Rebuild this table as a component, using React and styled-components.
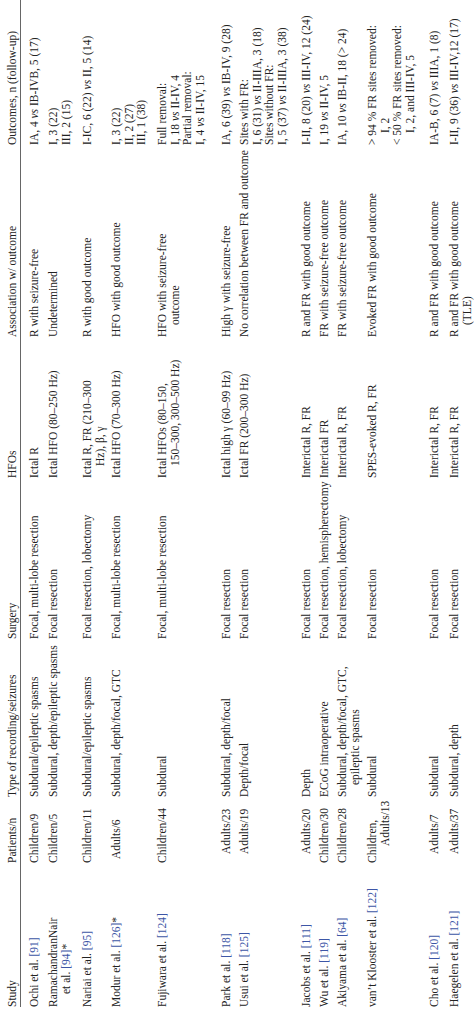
import React from 'react';
import styled, { createGlobalStyle } from 'styled-components';

const GlobalStyle = createGlobalStyle`
  html, body { margin: 0; padding: 0; background: #fff; }
  body { overflow: hidden; }
`;

const COLS = '144px 66px 158px 161px 141px 192px 1fr';

const Page = styled.div`
  width: 474px;
  height: 1009px;
  overflow: hidden;
  background: #fff;
`;

// the table is typeset landscape and turned a quarter to the left, like the scanned page
const Sheet = styled.div`
  width: 1009px;
  height: 474px;
  box-sizing: border-box;
  padding-left: 2px;
  transform-origin: 0 0;
  transform: translateY(1009px) rotate(-90deg);
  font-family: 'Liberation Serif', 'Times New Roman', serif;
  font-size: 11.5px;
  line-height: 12.7px;
  color: #222;
`;

const HeadRow = styled.div`
  display: grid;
  grid-template-columns: ${COLS};
  align-items: end;
  height: 21px;
  box-sizing: border-box;
  padding-bottom: 1.5px;
  border-bottom: 1.5px solid #666;
`;

const Body = styled.div`
  padding-top: 7px;
`;

const Row = styled.div`
  display: grid;
  grid-template-columns: ${COLS};
  align-items: start;
  height: ${p => (p.$h ? `${p.$h}px` : 'auto')};
`;

const Cell = styled.div`
  white-space: nowrap;
  padding-left: ${p => p.$shift || 0}px;
`;

const Line = styled.div`
  padding-left: ${p => p.$indent || 0}px;
`;

const Ref = styled.span`
  color: #3d56a6;
`;

const Vs = styled.span`
  font-style: italic;
`;

const ind = (t, px = 12) => ({ t, indent: px });

const fmt = text =>
  text.split(/(\[\d+\]|\bvs\b)/).map((part, i) => {
    if (/^\[\d+\]$/.test(part)) return <Ref key={i}>{part}</Ref>;
    if (part === 'vs') return <Vs key={i}>vs</Vs>;
    return part;
  });

const headers = [
  'Study',
  'Patients/n',
  'Type of recording/seizures',
  'Surgery',
  'HFOs',
  'Association w/ outcome',
  'Outcomes, n (follow-up)'
];

const rows = [
  {
    h: 19,
    study: ['Ochi et al. [91]'],
    pat: ['Children/9'],
    type: ['Subdural/epileptic spasms'],
    surg: ['Focal, multi-lobe resection'],
    hfo: ['Ictal R'],
    assoc: ['R with seizure-free'],
    out: ['IA, 4 vs IB-IVB, 5 (17)']
  },
  {
    h: 34,
    study: ['RamachandranNair', ind('et al. [94]*', 13)],
    pat: ['Children/5'],
    type: ['Subdural, depth/epileptic spasms'],
    surg: ['Focal resection'],
    hfo: ['Ictal HFO (80–250 Hz)'],
    assoc: ['Undetermined'],
    out: ['I, 3 (22)', 'III, 2 (15)']
  },
  {
    h: 29,
    study: ['Nariai et al. [95]'],
    pat: ['Children/11'],
    type: ['Subdural/epileptic spasms'],
    surg: ['Focal resection, lobectomy'],
    hfo: ['Ictal R, FR (210–300', ind('Hz), β, γ')],
    assoc: ['R with good outcome'],
    out: ['I-IC, 6 (22) vs II, 5 (14)']
  },
  {
    h: 46,
    study: ['Modur et al. [126]*'],
    pat: ['Adults/6'],
    shift: 4,
    type: ['Subdural, depth/focal, GTC'],
    surg: ['Focal, multi-lobe resection'],
    hfo: ['Ictal HFO (70–300 Hz)'],
    assoc: ['HFO with good outcome'],
    out: ['I, 3 (22)', 'II, 2 (27)', 'III, 1 (38)']
  },
  {
    h: 64,
    study: ['Fujiwara et al. [124]'],
    pat: ['Children/44'],
    type: ['Subdural'],
    surg: ['Focal, multi-lobe resection'],
    hfo: ['Ictal HFOs (80–150,', ind('150–300, 300–500 Hz)')],
    assoc: ['HFO with seizure-free', ind('outcome')],
    out: ['Full removal:', 'I, 18 vs II-IV, 4', 'Partial removal:', 'I, 4 vs II-IV, 15']
  },
  {
    h: 18,
    study: ['Park et al. [118]'],
    pat: ['Adults/23'],
    shift: 9,
    type: ['Subdural, depth/focal'],
    surg: ['Focal resection'],
    hfo: ['Ictal high γ (60–99 Hz)'],
    assoc: ['High γ with seizure-free'],
    out: ['IA, 6 (39) vs IB-IV, 9 (28)']
  },
  {
    h: 62,
    study: ['Usui et al. [125]'],
    pat: ['Adults/19'],
    shift: 9,
    type: ['Depth/focal'],
    surg: ['Focal resection'],
    hfo: ['Ictal FR (200–300 Hz)'],
    assoc: ['No correlation between FR and outcome'],
    out: [
      'Sites with FR:',
      'I, 6 (31) vs II-IIIA, 3 (18)',
      'Sites without FR:',
      'I, 5 (37) vs II-IIIA, 3 (38)'
    ]
  },
  {
    h: 18,
    study: ['Jacobs et al. [111]'],
    pat: ['Adults/20'],
    shift: 9,
    type: ['Depth'],
    surg: ['Focal resection'],
    hfo: ['Interictal R, FR'],
    assoc: ['R and FR with good outcome'],
    out: ['I-II, 8 (20) vs III-IV, 12 (24)']
  },
  {
    h: 18,
    study: ['Wu et al. [119]'],
    pat: ['Children/30'],
    type: ['ECoG intraoperative'],
    surg: ['Focal resection, hemispherectomy'],
    hfo: ['Interictal FR'],
    assoc: ['FR with seizure-free outcome'],
    out: ['I, 19 vs II-IV, 5']
  },
  {
    h: 30,
    study: ['Akiyama et al. [64]'],
    pat: ['Children/28'],
    type: ['Subdural, depth/focal, GTC,', ind('epileptic spasms')],
    surg: ['Focal resection, lobectomy'],
    hfo: ['Interictal R, FR'],
    assoc: ['FR with seizure-free outcome'],
    out: ['IA, 10 vs IB-II, 18 (> 24)']
  },
  {
    h: 62,
    study: ['van’t Klooster et al. [122]'],
    pat: ['Children,', ind('Adults/13', 17)],
    type: ['Subdural'],
    surg: ['Focal resection'],
    hfo: ['SPES-evoked R, FR'],
    assoc: ['Evoked FR with good outcome'],
    out: [
      '> 94 % FR sites removed:',
      ind('I, 2'),
      '< 50 % FR sites removed:',
      ind('I, 2, and III-IV, 5')
    ]
  },
  {
    h: 20,
    study: ['Cho et al. [120]'],
    pat: ['Adults/7'],
    shift: 9,
    type: ['Subdural'],
    surg: ['Focal resection'],
    hfo: ['Interictal R, FR'],
    assoc: ['R and FR with good outcome'],
    out: ['IA-B, 6 (7) vs IIIA, 1 (8)']
  },
  {
    study: ['Haegelen et al. [121]'],
    pat: ['Adults/37'],
    shift: 9,
    type: ['Subdural, depth'],
    surg: ['Focal resection'],
    hfo: ['Interictal R, FR'],
    assoc: ['R and FR with good outcome', ind('(TLE)')],
    out: ['I-II, 9 (36) vs III-IV,12 (17)']
  }
];

const Lines = ({ items }) =>
  items.map((l, i) =>
    typeof l === 'string' ? (
      <Line key={i}>{fmt(l)}</Line>
    ) : (
      <Line key={i} $indent={l.indent}>
        {fmt(l.t)}
      </Line>
    )
  );

const App = () => {
  return (
    <Page>
      <GlobalStyle />
      <Sheet>
        <HeadRow>
          {headers.map(h => (
            <Cell key={h}>{h}</Cell>
          ))}
        </HeadRow>
        <Body>
          {rows.map((r, i) => (
            <Row key={i} $h={r.h}>
              <Cell><Lines items={r.study} /></Cell>
              <Cell $shift={r.shift}><Lines items={r.pat} /></Cell>
              <Cell><Lines items={r.type} /></Cell>
              <Cell><Lines items={r.surg} /></Cell>
              <Cell><Lines items={r.hfo} /></Cell>
              <Cell><Lines items={r.assoc} /></Cell>
              <Cell><Lines items={r.out} /></Cell>
            </Row>
          ))}
        </Body>
      </Sheet>
    </Page>
  );
};

export default App;
